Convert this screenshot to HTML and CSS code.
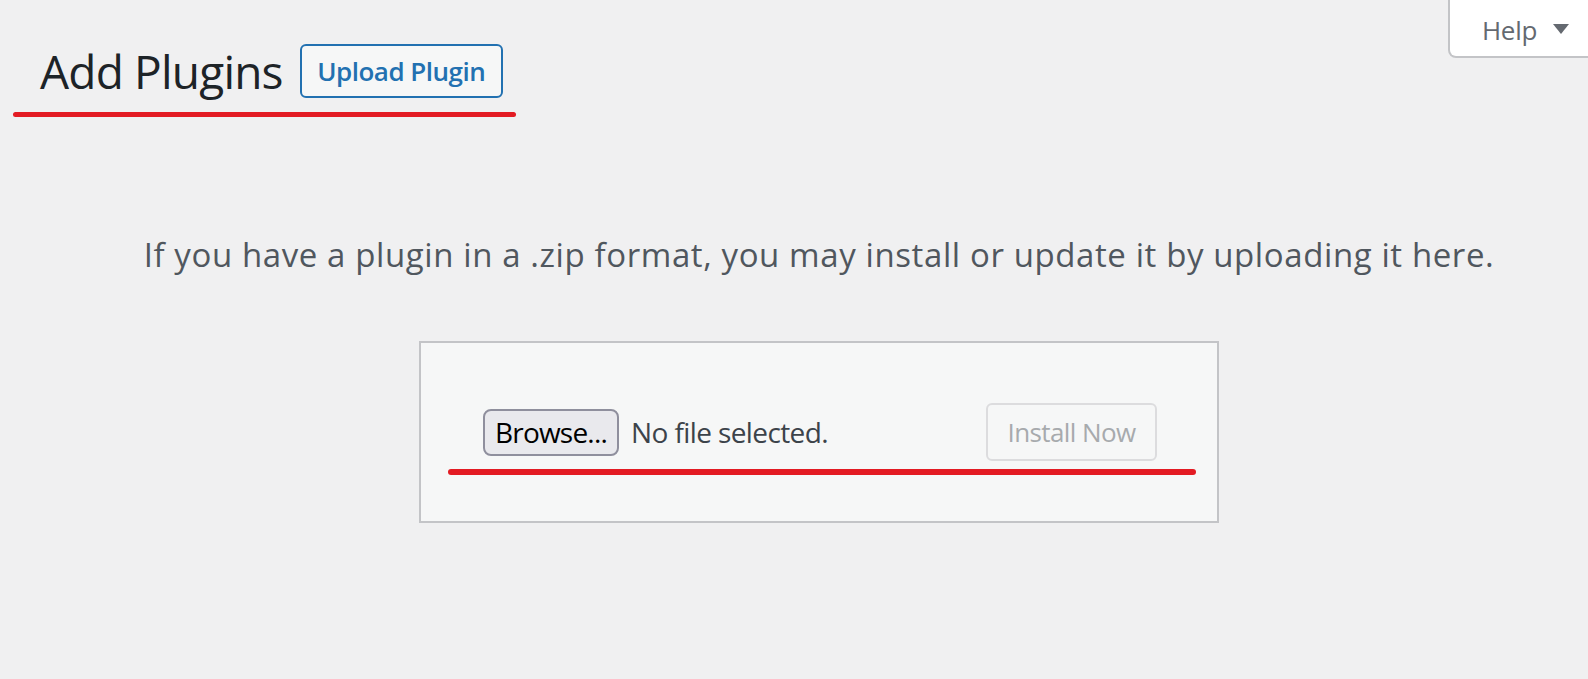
FILE: index.html
```html
<!DOCTYPE html>
<html lang="en">
<head>
<meta charset="utf-8">
<title>Add Plugins</title>
<link rel="stylesheet" href="styles.css">
</head>
<body>
<div class="help-tab">
  <span class="help-label">Help</span>
  <svg class="help-arrow" width="16" height="10" viewBox="0 0 16 10"><polygon points="0,0 16,0 8,10" fill="#646970"/></svg>
</div>
<div class="page">
  <div class="header">
    <h1 class="title">Add Plugins</h1>
    <a class="upload-btn">Upload Plugin</a>
  </div>
  <div class="mark mark-title"></div>
  <div class="content">
    <p class="install-help">If you have a plugin in a .zip format, you may install or update it by uploading it here.</p>
    <div class="upload-form">
      <div class="file-field">
        <span class="browse-btn">Browse...</span>
        <span class="file-name">No file selected.</span>
      </div>
      <span class="install-btn">Install Now</span>
      <div class="mark mark-form"></div>
    </div>
  </div>
</div>
</body>
</html>
```
FILE: styles.css
```css
html, body {
  margin: 0;
  padding: 0;
}
body {
  background: #f0f0f1;
  font-family: "Open Sans", "Noto Sans", sans-serif;
  width: 1588px;
  height: 679px;
  overflow: hidden;
  position: relative;
}
.help-tab {
  position: absolute;
  top: 0;
  left: 1448px;
  width: 128px;
  height: 56px;
  background: #fff;
  border-left: 2px solid #c3c4c7;
  border-right: 2px solid #c3c4c7;
  border-bottom: 2px solid #c3c4c7;
  border-radius: 0 0 8px 8px;
  box-sizing: content-box;
  padding-left: 32px;
  display: flex;
  align-items: center;
}
.help-label {
  font-size: 26px;
  line-height: 56px;
  color: #646970;
  letter-spacing: -0.3px;
  margin-top: 4px;
}
.help-arrow {
  margin-left: 16px;
  margin-top: 1px;
}
.page {
  padding-top: 41px;
}
.header {
  display: flex;
  align-items: center;
  padding-left: 40px;
  height: 60px;
}
.title {
  margin: 0;
  font-size: 46px;
  font-weight: 400;
  line-height: 60px;
  color: #1d2327;
  letter-spacing: -0.8px;
}
.upload-btn {
  margin-left: 17px;
  box-sizing: border-box;
  width: 203px;
  height: 54px;
  border: 2px solid #2271b1;
  border-radius: 6px;
  background: #f6f7f7;
  color: #2271b1;
  font-size: 26px;
  font-weight: 600;
  letter-spacing: -0.5px;
  display: flex;
  align-items: center;
  justify-content: center;
}
.mark {
  background: #e31b23;
  border-radius: 3px;
}
.mark-title {
  margin-top: 11px;
  margin-left: 13px;
  width: 503px;
  height: 5px;
}
.content {
  padding-left: 50px;
  display: flex;
  flex-direction: column;
  align-items: center;
}
.install-help {
  margin: 114px 0 0 0;
  font-size: 33px;
  line-height: 48px;
  color: #50575e;
  letter-spacing: 0.6px;
  white-space: nowrap;
}
.upload-form {
  position: relative;
  margin-top: 62px;
  box-sizing: border-box;
  width: 800px;
  height: 182px;
  background: #f6f7f7;
  border: 2px solid #c3c4c7;
  padding: 0 60px;
  display: flex;
  justify-content: space-between;
  align-items: center;
}
.file-field {
  display: flex;
  align-items: center;
  margin-left: 2px;
}
.browse-btn {
  box-sizing: border-box;
  width: 136px;
  height: 47px;
  background: #e9e9ed;
  border: 2px solid #8f8f9d;
  border-radius: 8px;
  color: #000;
  font-size: 28px;
  letter-spacing: -0.8px;
  display: flex;
  align-items: center;
  justify-content: center;
}
.file-name {
  margin-left: 12px;
  font-size: 28px;
  color: #3c434a;
  letter-spacing: -0.6px;
}
.install-btn {
  box-sizing: border-box;
  width: 171px;
  height: 58px;
  border: 2px solid #dcdcde;
  border-radius: 6px;
  background: #f6f7f7;
  color: #a7aaad;
  font-size: 26px;
  letter-spacing: -0.6px;
  display: flex;
  align-items: center;
  justify-content: center;
}
.mark-form {
  position: absolute;
  left: 27px;
  top: 126px;
  width: 748px;
  height: 6px;
}
```
